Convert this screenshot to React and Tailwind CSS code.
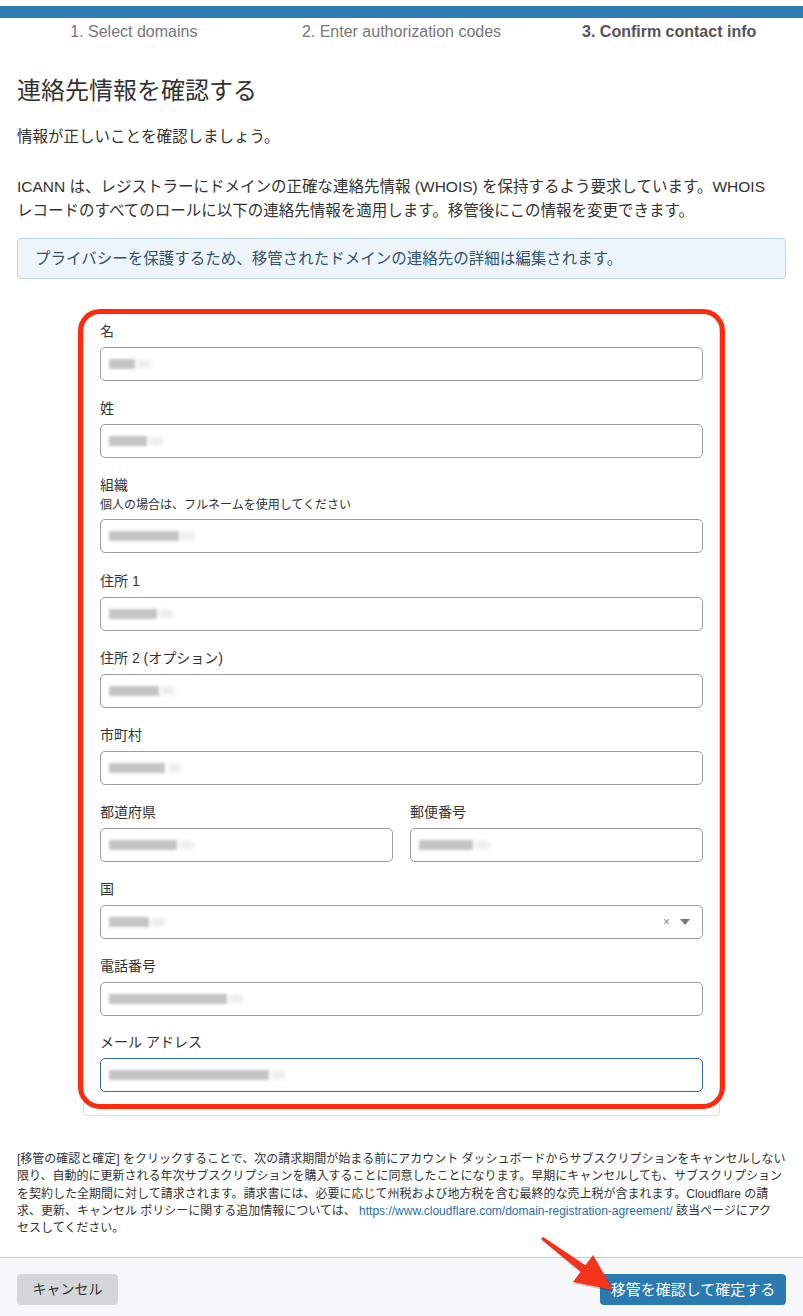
const STEPS = [
  { label: "1. Select domains", active: false },
  { label: "2. Enter authorization codes", active: false },
  { label: "3. Confirm contact info", active: true },
];

// blurred placeholder for the redacted values in the screenshot
function Redacted({ width }) {
  return (
    <div className="flex items-center gap-[2px]">
      <div className="h-[10px] bg-[#c4c4c4] blur-[1.5px]" style={{ width }} />
      <div className="h-[8px] w-[14px] bg-[#ececec] blur-[2px]" />
    </div>
  );
}

function Field({ label, hint, valueWidth, focused, className = "", children }) {
  return (
    <div className={className}>
      <div className="text-[14px] leading-5 text-[#333]">{label}</div>
      {hint && <div className="text-[12px] leading-4 text-[#333] mt-0.5">{hint}</div>}
      <div
        className={`mt-1.5 h-[34px] rounded-[5px] border bg-white flex items-center pl-[8px] pr-[12px] ${
          focused ? "border-[#2f6f99]" : "border-[#9b9b9b]"
        }`}
      >
        <Redacted width={valueWidth} />
        {children}
      </div>
    </div>
  );
}

export default function App() {
  return (
    <div className="relative w-[803px] min-h-[1316px] bg-white text-[#333] font-['Liberation_Sans','Noto_Sans_CJK_JP',sans-serif]">
      {/* progress */}
      <div className="h-[6px]" />
      <div className="h-[12px] bg-[#2d7db3]" />
      <div className="mt-[2px] grid grid-cols-3 text-center text-[16px] leading-6">
        {STEPS.map((s) => (
          <div
            key={s.label}
            className={s.active ? "font-bold text-[#555]" : "text-[#777]"}
          >
            {s.label}
          </div>
        ))}
      </div>

      <div className="px-[17px]">
        <h1 className="mt-[31px] text-[24px] leading-8 text-[#333]">
          連絡先情報を確認する
        </h1>
        <p className="mt-[18px] text-[15.5px] leading-6">
          情報が正しいことを確認しましょう。
        </p>
        <p className="mt-[26px] text-[15.5px] leading-6">
          ICANN は、レジストラーにドメインの正確な連絡先情報 (WHOIS) を保持するよう要求しています。WHOIS
          <br />
          レコードのすべてのロールに以下の連絡先情報を適用します。移管後にこの情報を変更できます。
        </p>

        <div className="mt-[15px] h-[41px] rounded-[4px] border border-[#bdd6ea] bg-[#edf5fb] flex items-center px-[17px] text-[15.5px] text-[#34516a]">
          プライバシーを保護するため、移管されたドメインの連絡先の詳細は編集されます。
        </div>

        {/* contact form */}
        <div className="relative mt-[34px] mx-[66px] rounded-[5px] border border-[#dcdcdc] px-[16px] pt-[7px] pb-[23px]">
          <Field label="名" valueWidth={26} className="mb-[17px]" />
          <Field label="姓" valueWidth={38} className="mb-[17px]" />
          <Field
            label="組織"
            hint="個人の場合は、フルネームを使用してください"
            valueWidth={70}
            className="mb-[18px]"
          />
          <Field label="住所 1" valueWidth={48} className="mb-[17px]" />
          <Field label="住所 2 (オプション)" valueWidth={50} className="mb-[17px]" />
          <Field label="市町村" valueWidth={56} className="mb-[17px]" />
          <div className="grid grid-cols-2 gap-[17px] mb-[17px]">
            <Field label="都道府県" valueWidth={68} />
            <Field label="郵便番号" valueWidth={54} />
          </div>
          <Field label="国" valueWidth={40} className="mb-[17px]">
            <div className="ml-auto flex items-center gap-[10px] text-[#888]">
              <span className="text-[12px] leading-none">×</span>
              <svg width="10" height="6" viewBox="0 0 10 6">
                <path d="M0 0h10L5 6z" fill="#777" />
              </svg>
            </div>
          </Field>
          <Field label="電話番号" valueWidth={118} className="mb-[16px]" />
          <Field label="メール アドレス" valueWidth={160} focused />

          {/* red highlight annotation */}
          <div className="pointer-events-none absolute -left-[6px] -right-[6px] -top-[5px] bottom-[6px] rounded-[22px] border-[5px] border-[#ff2a0e]" />
        </div>

        <p className="mt-[35px] text-[12px] leading-[17.3px] text-[#333]">
          [移管の確認と確定] をクリックすることで、次の請求期間が始まる前にアカウント ダッシュボードからサブスクリプションをキャンセルしない限り、自動的に更新される年次サブスクリプションを購入することに同意したことになります。早期にキャンセルしても、サブスクリプションを契約した全期間に対して請求されます。請求書には、必要に応じて州税および地方税を含む最終的な売上税が含まれます。Cloudflare
          の請求、更新、キャンセル ポリシーに関する追加情報については、{" "}
          <a className="text-[#2b6fa5]">
            https://www.cloudflare.com/domain-registration-agreement/
          </a>{" "}
          該当ページにアク
          <br />
          セスしてください。
        </p>
      </div>

      {/* footer */}
      <div className="mt-[20px] border-t border-[#c9c9c9] bg-[#f6f7f8] h-[60px] px-[17px] pt-[16px] flex justify-between items-start">
        <button className="w-[101px] h-[31px] rounded-[4px] bg-[#d5d6d8] text-[14px] text-[#333]">
          キャンセル
        </button>
        <button className="w-[186px] h-[31px] rounded-[4px] bg-[#2c7bb0] text-[15px] text-white">
          移管を確認して確定する
        </button>
      </div>

      {/* red arrow annotation */}
      <svg
        className="pointer-events-none absolute left-[530px] top-[1230px]"
        width="100"
        height="70"
        viewBox="0 0 100 70"
      >
        <polygon
          points="12.9,6.8 55.4,35.3 63,25 83,60 43,52 50.6,41.7 11.1,9.2"
          fill="#000"
          opacity="0.18"
          transform="translate(1.5,2)"
        />
        <polygon
          points="12.9,6.8 55.4,35.3 63,25 83,60 43,52 50.6,41.7 11.1,9.2"
          fill="#f5321c"
        />
      </svg>
    </div>
  );
}
